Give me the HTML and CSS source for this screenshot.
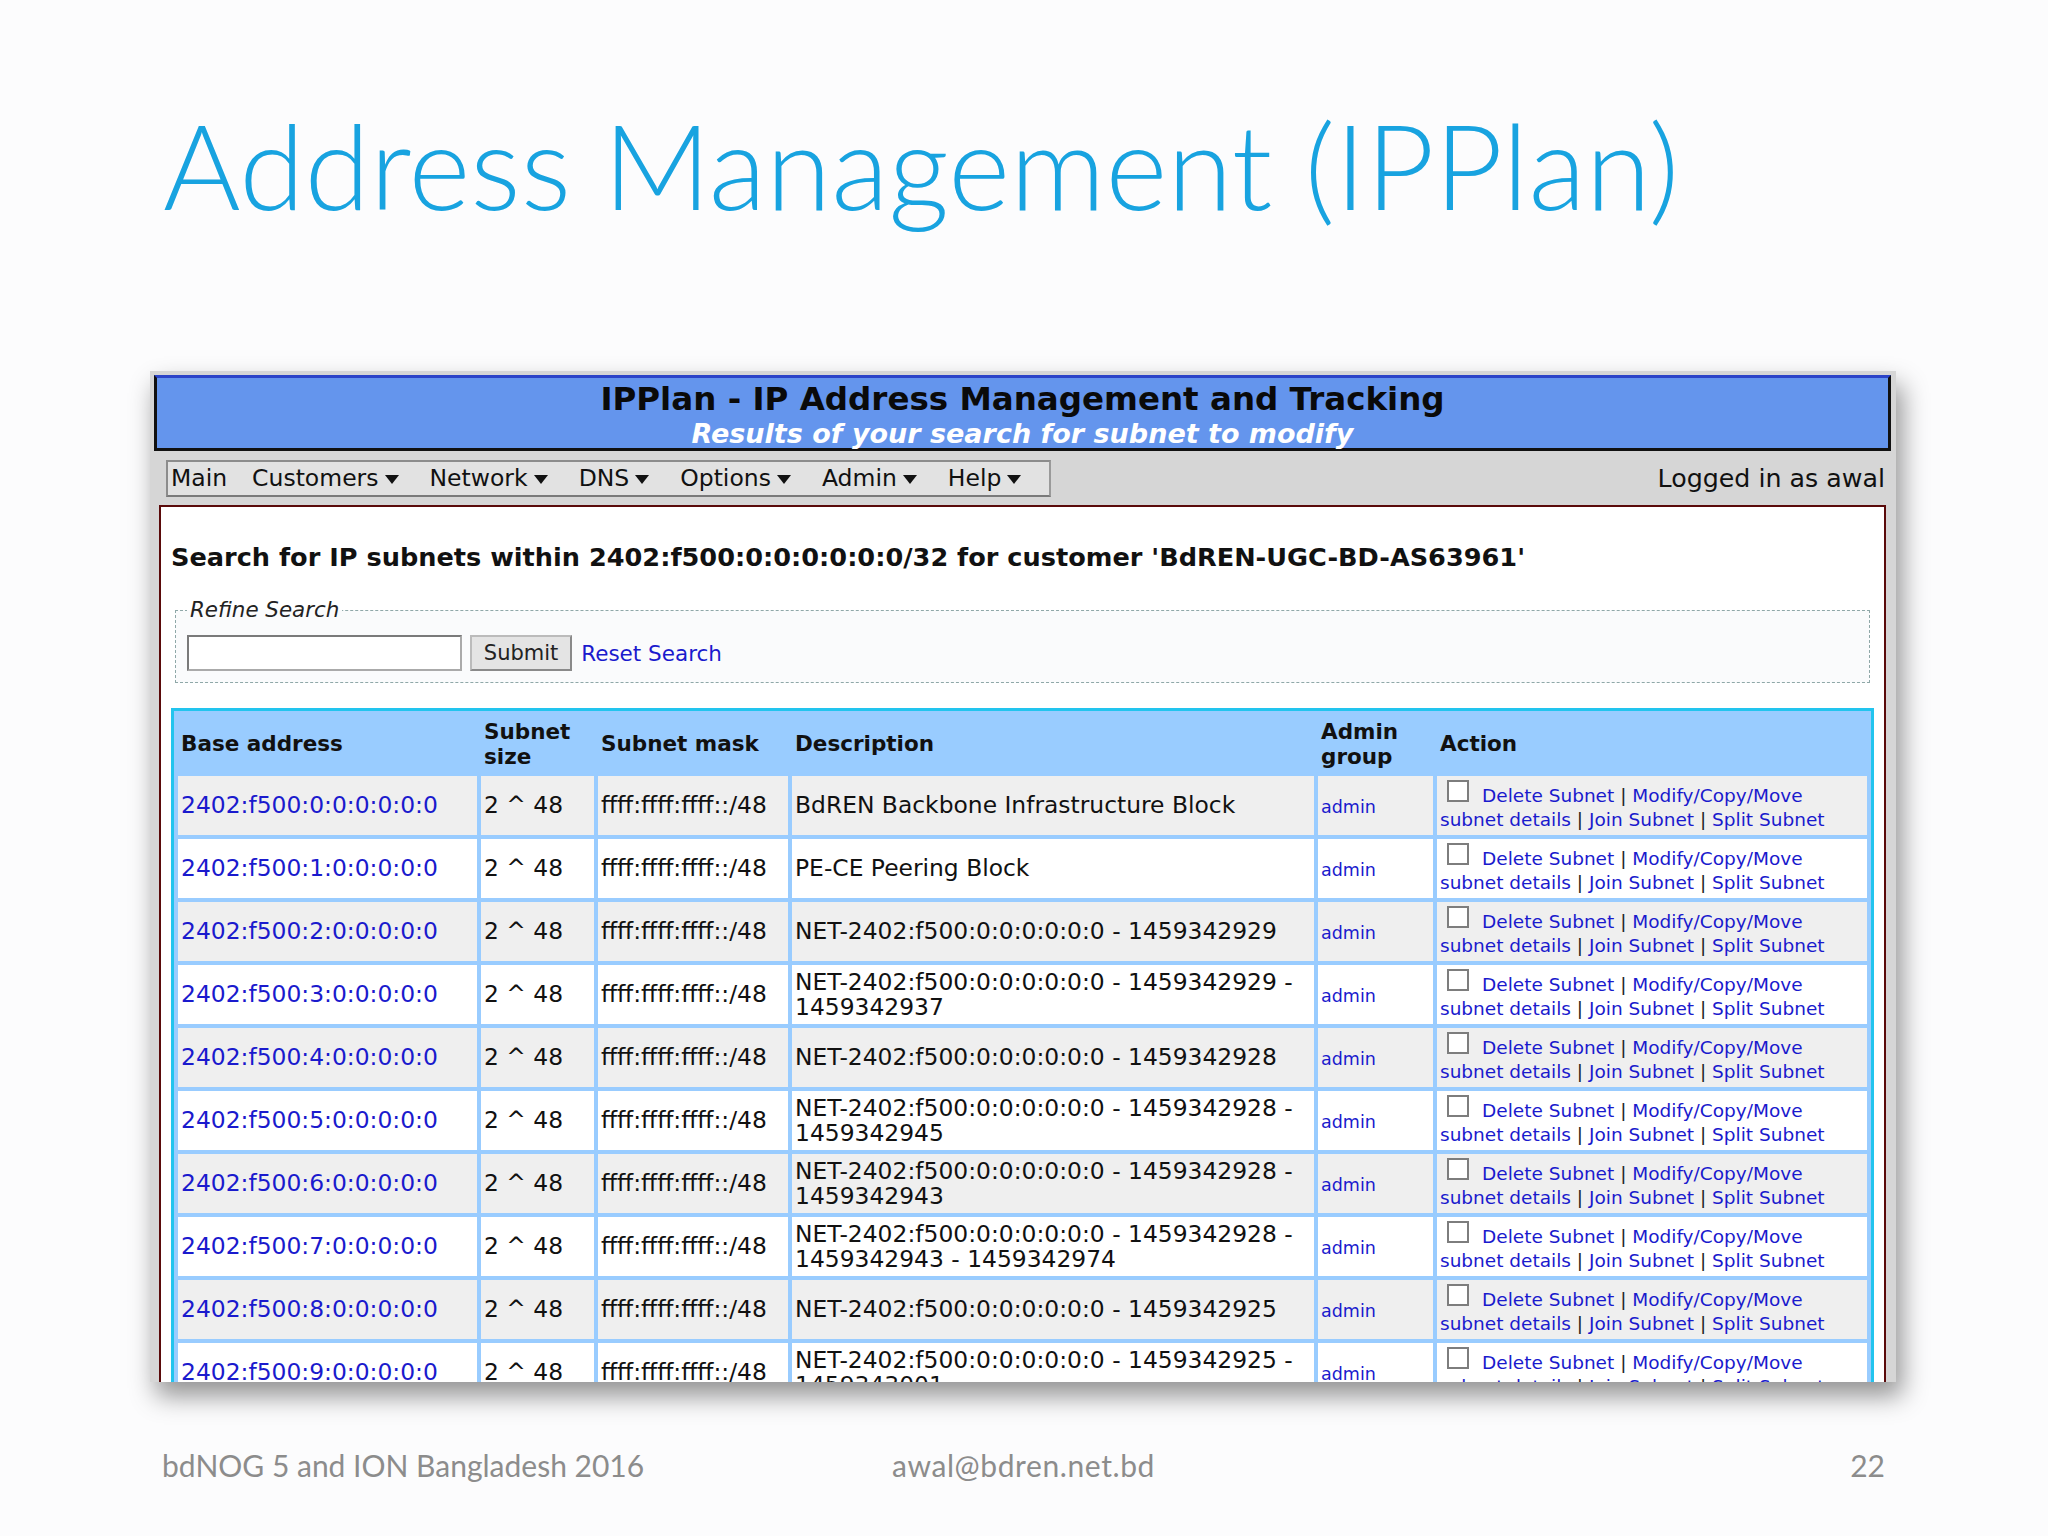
FILE: index.html
```html
<!DOCTYPE html>
<html lang="en">
<head>
    <meta charset="UTF-8">
    <title>Address Management (IPPlan)</title>
    <link rel="stylesheet" href="styles.css">
</head>
<body>
<div class="slide">
    <h1 class="slide-title">Address Management (IPPlan)</h1>

    <!-- screenshot of the IPPlan search page -->
    <div class="shot">
        <div class="app-header">
            <div class="app-title">IPPlan - IP Address Management and Tracking</div>
            <div class="app-sub">Results of your search for subnet to modify</div>
        </div>
        <div class="menubar">
            <ul class="menu">
                <li>Main</li>
                <li>Customers<span class="arrow"></span></li>
                <li>Network<span class="arrow"></span></li>
                <li>DNS<span class="arrow"></span></li>
                <li>Options<span class="arrow"></span></li>
                <li>Admin<span class="arrow"></span></li>
                <li>Help<span class="arrow"></span></li>
            </ul>
            <span class="login">Logged in as awal</span>
        </div>
        <div class="panel">
            <h3>Search for IP subnets within 2402:f500:0:0:0:0:0:0/32 for customer 'BdREN-UGC-BD-AS63961'</h3>
            <fieldset class="refine">
                <legend>Refine Search</legend>
                <input type="text" class="search-box">
                <button type="button" class="submit">Submit</button>
                <a href="#" class="reset">Reset Search</a>
            </fieldset>
            <table class="subnets">
                <colgroup>
                    <col class="c-base"><col class="c-size"><col class="c-mask">
                    <col class="c-desc"><col class="c-group"><col class="c-action">
                </colgroup>
                <thead>
                <tr>
                    <th>Base address</th>
                    <th>Subnet size</th>
                    <th>Subnet mask</th>
                    <th>Description</th>
                    <th>Admin group</th>
                    <th>Action</th>
                </tr>
                </thead>
                <tbody>
                <tr>
                    <td><a href="#">2402:f500:0:0:0:0:0:0</a></td><td>2 ^ 48</td><td>ffff:ffff:ffff::/48</td>
                    <td>BdREN Backbone Infrastructure Block</td>
                    <td class="grp"><a href="#">admin</a></td>
                    <td class="act"><input type="checkbox" class="pick"><a href="#">Delete Subnet</a> | <a href="#">Modify/Copy/Move</a> <a href="#">subnet details</a> | <a href="#">Join Subnet</a> | <a href="#">Split Subnet</a></td>
                </tr>
                <tr>
                    <td><a href="#">2402:f500:1:0:0:0:0:0</a></td><td>2 ^ 48</td><td>ffff:ffff:ffff::/48</td>
                    <td>PE-CE Peering Block</td>
                    <td class="grp"><a href="#">admin</a></td>
                    <td class="act"><input type="checkbox" class="pick"><a href="#">Delete Subnet</a> | <a href="#">Modify/Copy/Move</a> <a href="#">subnet details</a> | <a href="#">Join Subnet</a> | <a href="#">Split Subnet</a></td>
                </tr>
                <tr>
                    <td><a href="#">2402:f500:2:0:0:0:0:0</a></td><td>2 ^ 48</td><td>ffff:ffff:ffff::/48</td>
                    <td>NET-2402:f500:0:0:0:0:0:0 - 1459342929</td>
                    <td class="grp"><a href="#">admin</a></td>
                    <td class="act"><input type="checkbox" class="pick"><a href="#">Delete Subnet</a> | <a href="#">Modify/Copy/Move</a> <a href="#">subnet details</a> | <a href="#">Join Subnet</a> | <a href="#">Split Subnet</a></td>
                </tr>
                <tr>
                    <td><a href="#">2402:f500:3:0:0:0:0:0</a></td><td>2 ^ 48</td><td>ffff:ffff:ffff::/48</td>
                    <td>NET-2402:f500:0:0:0:0:0:0 - 1459342929 - 1459342937</td>
                    <td class="grp"><a href="#">admin</a></td>
                    <td class="act"><input type="checkbox" class="pick"><a href="#">Delete Subnet</a> | <a href="#">Modify/Copy/Move</a> <a href="#">subnet details</a> | <a href="#">Join Subnet</a> | <a href="#">Split Subnet</a></td>
                </tr>
                <tr>
                    <td><a href="#">2402:f500:4:0:0:0:0:0</a></td><td>2 ^ 48</td><td>ffff:ffff:ffff::/48</td>
                    <td>NET-2402:f500:0:0:0:0:0:0 - 1459342928</td>
                    <td class="grp"><a href="#">admin</a></td>
                    <td class="act"><input type="checkbox" class="pick"><a href="#">Delete Subnet</a> | <a href="#">Modify/Copy/Move</a> <a href="#">subnet details</a> | <a href="#">Join Subnet</a> | <a href="#">Split Subnet</a></td>
                </tr>
                <tr>
                    <td><a href="#">2402:f500:5:0:0:0:0:0</a></td><td>2 ^ 48</td><td>ffff:ffff:ffff::/48</td>
                    <td>NET-2402:f500:0:0:0:0:0:0 - 1459342928 - 1459342945</td>
                    <td class="grp"><a href="#">admin</a></td>
                    <td class="act"><input type="checkbox" class="pick"><a href="#">Delete Subnet</a> | <a href="#">Modify/Copy/Move</a> <a href="#">subnet details</a> | <a href="#">Join Subnet</a> | <a href="#">Split Subnet</a></td>
                </tr>
                <tr>
                    <td><a href="#">2402:f500:6:0:0:0:0:0</a></td><td>2 ^ 48</td><td>ffff:ffff:ffff::/48</td>
                    <td>NET-2402:f500:0:0:0:0:0:0 - 1459342928 - 1459342943</td>
                    <td class="grp"><a href="#">admin</a></td>
                    <td class="act"><input type="checkbox" class="pick"><a href="#">Delete Subnet</a> | <a href="#">Modify/Copy/Move</a> <a href="#">subnet details</a> | <a href="#">Join Subnet</a> | <a href="#">Split Subnet</a></td>
                </tr>
                <tr>
                    <td><a href="#">2402:f500:7:0:0:0:0:0</a></td><td>2 ^ 48</td><td>ffff:ffff:ffff::/48</td>
                    <td>NET-2402:f500:0:0:0:0:0:0 - 1459342928 - 1459342943 - 1459342974</td>
                    <td class="grp"><a href="#">admin</a></td>
                    <td class="act"><input type="checkbox" class="pick"><a href="#">Delete Subnet</a> | <a href="#">Modify/Copy/Move</a> <a href="#">subnet details</a> | <a href="#">Join Subnet</a> | <a href="#">Split Subnet</a></td>
                </tr>
                <tr>
                    <td><a href="#">2402:f500:8:0:0:0:0:0</a></td><td>2 ^ 48</td><td>ffff:ffff:ffff::/48</td>
                    <td>NET-2402:f500:0:0:0:0:0:0 - 1459342925</td>
                    <td class="grp"><a href="#">admin</a></td>
                    <td class="act"><input type="checkbox" class="pick"><a href="#">Delete Subnet</a> | <a href="#">Modify/Copy/Move</a> <a href="#">subnet details</a> | <a href="#">Join Subnet</a> | <a href="#">Split Subnet</a></td>
                </tr>
                <tr>
                    <td><a href="#">2402:f500:9:0:0:0:0:0</a></td><td>2 ^ 48</td><td>ffff:ffff:ffff::/48</td>
                    <td>NET-2402:f500:0:0:0:0:0:0 - 1459342925 - 1459343001</td>
                    <td class="grp"><a href="#">admin</a></td>
                    <td class="act"><input type="checkbox" class="pick"><a href="#">Delete Subnet</a> | <a href="#">Modify/Copy/Move</a> <a href="#">subnet details</a> | <a href="#">Join Subnet</a> | <a href="#">Split Subnet</a></td>
                </tr>
                </tbody>
            </table>
        </div>
    </div>

    <footer class="slide-foot">
        <span>bdNOG 5 and ION Bangladesh 2016</span>
        <span class="mail">awal@bdren.net.bd</span>
        <span class="page-no">22</span>
    </footer>
</div>
</body>
</html>
```

FILE: styles.css
```css
body { margin: 0; background: #fcfcfd; }
.slide { width: 2048px; height: 1536px; overflow: hidden; background: #fcfcfd; font-family: Lato, "Open Sans", sans-serif; }
.slide-title { margin: 0; padding: 94px 0 0 163px; font-size: 118.5px; line-height: 140px; font-weight: 300; color: #18a3e0; white-space: nowrap; }

/* screenshot frame */
.shot { margin: 137px 0 0 150px; width: 1746px; height: 1011px; box-sizing: border-box; padding: 4px 5px 0 4px; overflow: hidden; background: #d6d6d6; box-shadow: 6px 14px 24px rgba(0,0,0,.42); font-family: "DejaVu Sans", Verdana, sans-serif; color: #111; }

.app-header { height: 70px; background: #6495ed; border: 3px solid #111; border-top-color: #2c44c8; text-align: center; }
.app-title { font-size: 32.5px; font-weight: bold; line-height: 36px; padding-top: 3px; color: #0a0a0a; }
.app-sub { font-size: 27px; font-weight: bold; font-style: italic; line-height: 30px; padding-top: 2px; color: #fff; }

.menubar { height: 54px; display: flex; align-items: center; justify-content: space-between; }
.menu { list-style: none; margin: 0 0 0 12px; padding: 0 22px 0 3px; height: 33px; display: flex; align-items: center; gap: 25px; background: #e2e2e2; border: 2px solid #8c8c8c; border-right-color: #9a9a9a; border-bottom-color: #7a7a7a; font-size: 23.5px; }
.menu li { display: flex; align-items: center; }
.arrow { width: 0; height: 0; margin: 3px 6px 0; border-left: 7px solid transparent; border-right: 7px solid transparent; border-top: 9px solid #111; }
.login { margin-right: 6px; font-size: 25.3px; }

.panel { margin: 0 5px; padding: 0 10px 40px; background: #fff; border: 2px solid #5a0a0a; border-bottom: none; }
.panel h3 { margin: 35px 0 0; font-size: 25.6px; line-height: 30px; white-space: nowrap; }

.refine { margin: 26px 4px 0; padding: 13px 10px 11px 11px; border: 1px dashed #8fa8a8; background: #fafbfc; }
.refine legend { padding: 0 3px; font-size: 21.4px; line-height: 24px; font-style: italic; color: #222; }
.search-box { width: 275px; height: 36px; box-sizing: border-box; margin: 0; vertical-align: middle; border: 2px solid #7a7a7a; border-right-color: #aaa; border-bottom-color: #aaa; background: #fff; }
.submit { width: 102px; height: 36px; margin: 0 0 0 3px; vertical-align: middle; font-family: inherit; font-size: 21px; color: #222; background: #e4e4e4; border: 2px solid #8a8a8a; border-top-color: #bbb; border-left-color: #bbb; }
.reset { margin-left: 4px; vertical-align: middle; font-size: 21.5px; color: #1a1acd; text-decoration: none; }

.subnets { margin-top: 25px; width: 1703px; table-layout: fixed; border: 3px solid #22c4ee; border-spacing: 4px; background: #99ccff; }
.c-base { width: 299px; } .c-size { width: 113px; } .c-mask { width: 190px; }
.c-desc { width: 522px; } .c-group { width: 115px; } .c-action { width: 430px; }
.subnets th { height: 57px; padding: 0 3px; text-align: left; font-size: 21.5px; line-height: 25px; font-weight: bold; vertical-align: middle; }
.subnets td { height: 59px; box-sizing: border-box; padding: 2px 3px; font-size: 23.4px; line-height: 25px; vertical-align: middle; background: #fff; }
.subnets tbody tr:nth-child(odd) td { background: #efefef; }
.subnets a { color: #1a1acd; text-decoration: none; }
.subnets td.grp { font-size: 17.5px; padding-top: 6px; }
.subnets td.act { font-size: 18.5px; line-height: 24px; color: #222; }
.pick { appearance: none; -webkit-appearance: none; width: 22px; height: 22px; margin: 0 13px 0 7px; border: 2px solid #7d7d7d; background: #fff; }

.slide-foot { display: grid; grid-template-columns: 1fr auto 1fr; margin-top: 63px; padding: 0 163px 0 162px; font-size: 30px; line-height: 40px; color: #8c8c8c; }
.mail { letter-spacing: 0.6px; }
.page-no { text-align: right; }
```
